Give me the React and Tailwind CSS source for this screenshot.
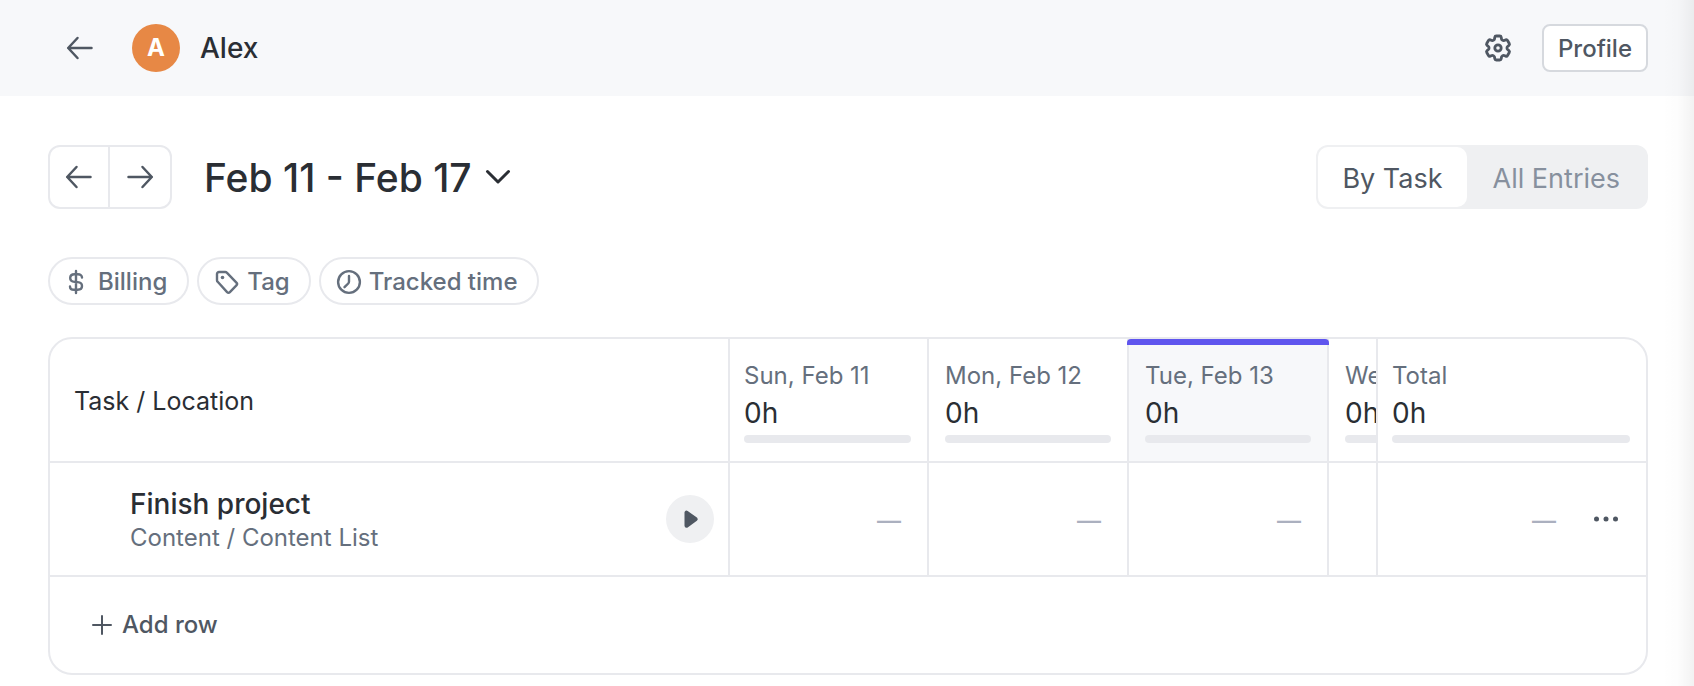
import React from "react";

const line = {
  fill: "none",
  stroke: "currentColor",
  strokeLinecap: "round",
  strokeLinejoin: "round",
  "aria-hidden": true,
};

function ArrowLeft() {
  return (
    <svg {...line} className="size-8" viewBox="0 0 32 32" strokeWidth="2.5">
      <path d="M27.500 16H4.200M13.500 6L4.200 16l9.300 10" />
    </svg>
  );
}

function ArrowRight() {
  return (
    <svg {...line} className="size-8" viewBox="0 0 32 32" strokeWidth="2.5">
      <path d="M4.500 16h23.300M18.500 6l9.300 10-9.300 10" />
    </svg>
  );
}

function Chevron() {
  return (
    <svg {...line} className="size-7" viewBox="0 0 28 28" strokeWidth="3">
      <path d="M3.500 8.500L14 19l10.500-10.500" />
    </svg>
  );
}

function Gear() {
  return (
    <svg {...line} className="size-8" viewBox="0 0 24 24" strokeWidth="2.1">
      <path d="M9.594 3.94c.09-.542.56-.94 1.11-.94h2.593c.55 0 1.02.398 1.11.94l.213 1.281c.063.374.313.686.645.87.074.04.147.083.22.127.325.196.72.257 1.075.124l1.217-.456a1.125 1.125 0 0 1 1.37.49l1.296 2.247a1.125 1.125 0 0 1-.26 1.431l-1.003.827c-.293.241-.438.613-.43.992a7.723 7.723 0 0 1 0 .255c-.008.378.137.75.43.991l1.004.827c.424.35.534.955.26 1.43l-1.298 2.247a1.125 1.125 0 0 1-1.369.491l-1.217-.456c-.355-.133-.75-.072-1.076.124a6.47 6.47 0 0 1-.22.128c-.331.183-.581.495-.644.869l-.213 1.281c-.09.543-.56.94-1.11.94h-2.594c-.55 0-1.019-.398-1.11-.94l-.213-1.281c-.062-.374-.312-.686-.644-.87a6.52 6.52 0 0 1-.22-.127c-.325-.196-.72-.257-1.076-.124l-1.217.456a1.125 1.125 0 0 1-1.369-.49l-1.297-2.247a1.125 1.125 0 0 1 .26-1.431l1.004-.827c.292-.24.437-.613.43-.991a6.932 6.932 0 0 1 0-.255c.007-.38-.138-.751-.43-.992l-1.004-.827a1.125 1.125 0 0 1-.26-1.43l1.297-2.247a1.125 1.125 0 0 1 1.37-.491l1.216.456c.356.133.751.072 1.076-.124.072-.044.146-.086.22-.128.332-.183.582-.495.644-.869l.214-1.28Z" />
      <circle cx="12" cy="12" r="2.4" />
    </svg>
  );
}

function Dollar() {
  return (
    <svg {...line} className="h-7 w-4" viewBox="0 0 16 28" strokeWidth="2.4">
      <path d="M8 3v22M14 9.600C14 7.400 12.200 6.300 10 6.300H6.500C4 6.300 2.200 7.800 2.200 10S4 13.700 6.500 13.900l3.200.2C12.200 14.300 14 15.800 14 18s-1.800 3.700-4.300 3.700H6C3.800 21.700 2 20.600 2 18.400" />
    </svg>
  );
}

function Tag() {
  return (
    <svg {...line} className="size-7" viewBox="0 0 28 28" strokeWidth="2.4">
      <path d="M4 12.200V6c0-1.100.9-2 2-2h6.200c.6 0 1.200.2 1.600.7l9.600 9.900c.8.800.8 2 0 2.800l-6.500 6.700c-.8.800-2 .8-2.800 0L4.700 13.800c-.5-.4-.7-1-.7-1.600z" />
      <circle cx="9.500" cy="9.500" r="1.800" fill="currentColor" stroke="none" />
    </svg>
  );
}

function Clock() {
  return (
    <svg {...line} className="size-7" viewBox="0 0 28 28" strokeWidth="2.4">
      <circle cx="14" cy="14" r="10.900" />
      <path d="M14 8v5.500c0 .8-.3 1.500-.8 2L9.500 19.200" />
    </svg>
  );
}

const days = [
  { label: "Sun, Feb 11", pad: "pr-4 pl-3.5" },
  { label: "Mon, Feb 12", pad: "px-4" },
  { label: "Tue, Feb 13", pad: "px-4", today: true },
  { label: "Wed, Feb 14", pad: "w-[198px] px-4", last: true },
];

function Hours({ label }) {
  return (
    <>
      <div className="text-2xl leading-[34px] text-[#656f7d]">{label}</div>
      <div className="mt-0.5 mb-1 text-[28px] leading-9 text-[#2a2e34]">0h</div>
      <div className="h-2 rounded-full bg-[#e8e9ed]" />
    </>
  );
}

const pill =
  "flex h-12 items-center rounded-full border-2 border-[#e8e9ed] pt-px text-2xl font-medium text-[#656f7d]";

export default function App() {
  return (
    <div className="relative flex min-h-screen flex-col bg-white font-['Inter',sans-serif] text-[#2a2e34]">
      <header className="flex h-24 items-center bg-[#f7f8fa] pr-[46px] pl-16">
        <button type="button" aria-label="Back" className="text-[#4f5762]">
          <ArrowLeft />
        </button>
        <span className="ml-9 grid size-12 place-items-center rounded-full bg-[#e78845] text-2xl font-bold text-white">
          A
        </span>
        <h1 className="ml-5 text-[28px] font-medium">Alex</h1>
        <button type="button" aria-label="Settings" className="ml-auto text-[#4f5762]">
          <Gear />
        </button>
        <button
          type="button"
          className="ml-7 h-12 rounded-lg border-2 border-[#d6d9de] bg-white px-3.5 pt-0.5 text-2xl font-medium text-[#4f5762]"
        >
          Profile
        </button>
      </header>

      <main className="flex flex-col pt-[49px] pr-[46px] pb-[11px] pl-12">
        <div className="flex h-16 items-center">
          <div className="flex h-16 divide-x-2 divide-[#e8e9ed] rounded-xl border-2 border-[#e8e9ed] text-[#4f5762]">
            <button type="button" aria-label="Previous week" className="grid w-[60px] place-items-center">
              <ArrowLeft />
            </button>
            <button type="button" aria-label="Next week" className="grid w-[60px] place-items-center">
              <ArrowRight />
            </button>
          </div>
          <button type="button" className="ml-8 flex items-center gap-3 text-[39px] leading-none font-medium">
            Feb 11 - Feb 17
            <Chevron />
          </button>
          <div className="ml-auto flex h-16 rounded-xl bg-[#eff0f2] p-0.5 text-[27px]">
            <button
              type="button"
              aria-pressed="true"
              className="rounded-[10px] bg-white px-6 pt-1 text-[#4f5762]"
            >
              By Task
            </button>
            <button type="button" aria-pressed="false" className="px-[26px] pt-1 text-[#87909e]">
              All Entries
            </button>
          </div>
        </div>

        <div className="mt-12 flex gap-2">
          <button type="button" className={pill + " gap-3.5 pr-5 pl-[18px]"}>
            <Dollar />
            Billing
          </button>
          <button type="button" className={pill + " gap-1.5 pr-[19px] pl-3.5"}>
            <Tag />
            Tag
          </button>
          <button type="button" className={pill + " gap-1.5 pr-[19px] pl-3.5"}>
            <Clock />
            Tracked time
          </button>
        </div>

        <div className="mt-8 overflow-hidden rounded-3xl border-2 border-[#e8e9ed]">
          <table className="w-full table-fixed border-separate border-spacing-0">
            <colgroup>
              <col className="w-[680px]" />
              <col className="w-[199px]" />
              <col className="w-[200px]" />
              <col className="w-[200px]" />
              <col />
              <col className="w-[270px]" />
            </colgroup>
            <thead>
              <tr className="h-[124px] text-left [&>th]:border-b-2 [&>th]:border-[#e8e9ed] [&>th]:font-normal">
                <th scope="col" className="border-r-2 pt-1 pl-6 text-[25px]">
                  Task / Location
                </th>
                {days.map((d) => (
                  <th
                    key={d.label}
                    scope="col"
                    className={
                      "relative p-0 align-top " +
                      (d.last ? "overflow-hidden " : "border-r-2 ") +
                      (d.today ? "bg-[#f7f8fa]" : "")
                    }
                  >
                    {d.today && (
                      <span className="absolute top-0 -right-0.5 -left-0.5 h-1.5 rounded-t-sm bg-[#5f55ee]" />
                    )}
                    <div className={"pt-5 " + d.pad}>
                      <Hours label={d.label} />
                    </div>
                  </th>
                ))}
                <th scope="col" className="border-l-2 pt-5 pr-4 pb-0 pl-3.5 align-top">
                  <Hours label="Total" />
                </th>
              </tr>
            </thead>
            <tbody>
              <tr className="h-[114px] [&>td]:border-b-2 [&>td]:border-[#e8e9ed]">
                <td className="border-r-2 py-0 pr-3.5 pl-20">
                  <div className="flex items-center justify-between">
                    <div className="pt-0.5">
                      <div className="text-[28px] leading-9 font-medium">Finish project</div>
                      <div className="text-2xl leading-8 text-[#656f7d]">Content / Content List</div>
                    </div>
                    <button
                      type="button"
                      aria-label="Start timer"
                      className="grid size-12 place-items-center rounded-full bg-[#eff0f2] text-[#4f5762]"
                    >
                      <svg {...line} className="size-6" viewBox="0 0 24 24" fill="currentColor" strokeWidth="4">
                        <path d="M8.500 5.600v13.200L17.700 12.200z" />
                      </svg>
                    </button>
                  </div>
                </td>
                {days.map((d) => (
                  <td
                    key={d.label}
                    className={
                      "px-0 pt-1 pb-0 text-2xl font-medium text-[#abb0bf] " +
                      (d.last ? "overflow-hidden" : "border-r-2")
                    }
                  >
                    <div className={"pr-[26px] text-right " + (d.last ? "w-[198px]" : "")}>—</div>
                  </td>
                ))}
                <td className="border-l-2 py-0 pr-6 pl-4">
                  <div className="flex items-center justify-end gap-[34px] text-2xl font-medium text-[#abb0bf]">
                    <span className="pt-1">—</span>
                    <button type="button" aria-label="More options" className="text-[#4f5762]">
                      <svg className="size-8" viewBox="0 0 32 32" fill="currentColor" aria-hidden="true">
                        <circle cx="6.500" cy="16" r="2.500" />
                        <circle cx="16" cy="16" r="2.500" />
                        <circle cx="25.500" cy="16" r="2.500" />
                      </svg>
                    </button>
                  </div>
                </td>
              </tr>
            </tbody>
            <tfoot>
              <tr className="h-24">
                <td colSpan={6} className="py-0 pl-10">
                  <button type="button" className="flex items-center gap-2 text-2xl font-medium text-[#4f5762]">
                    <svg {...line} className="size-6" viewBox="0 0 24 24" strokeWidth="2">
                      <path d="M12 3v18M3 12h18" />
                    </svg>
                    Add row
                  </button>
                </td>
              </tr>
            </tfoot>
          </table>
        </div>
      </main>

      <div className="pointer-events-none absolute inset-y-0 right-0 w-8 bg-linear-to-r from-transparent via-black/1 to-black/5" />
    </div>
  );
}
